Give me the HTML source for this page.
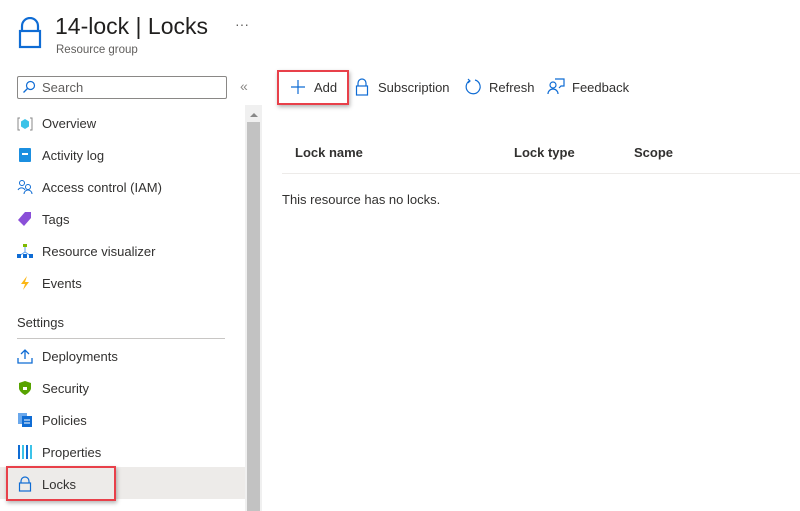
<!DOCTYPE html><html><head><style>
body{margin:0;width:800px;height:511px;overflow:hidden;background:#fff;font-family:"Liberation Sans",sans-serif;color:#323130;position:relative}
.a{position:absolute}
.it{position:absolute;left:42px;font-size:13px;color:#323130}
.ic{position:absolute;left:17px;width:16px;height:16px}
</style></head><body>
<svg class="a" style="left:18px;top:17px" width="24" height="32" viewBox="0 0 24 32"><path d="M4 14V9a8 8 0 0 1 16 0v5" fill="none" stroke="#0f6cd4" stroke-width="2.2"/><rect x="2" y="14" width="20" height="16" fill="none" stroke="#0f6cd4" stroke-width="2.2"/></svg>
<div class="a" style="left:55px;top:13px;font-size:23px;color:#201f1e">14-lock | Locks</div>
<div class="a" style="left:235px;top:16px;font-size:14px;color:#605e5c">···</div>
<div class="a" style="left:56px;top:44px;font-size:11.5px;color:#605e5c">Resource group</div>
<div class="a" style="left:17px;top:76px;width:208px;height:21px;border:1px solid #8a8886;border-radius:2px"></div>
<svg class="a" style="left:22px;top:80px" width="14" height="14"><circle cx="8.5" cy="5.5" r="4" fill="none" stroke="#0f6cd4" stroke-width="1.2"/><path d="M5.5 8.5 1.5 12.5" stroke="#0f6cd4" stroke-width="1.3"/></svg>
<div class="a" style="left:42px;top:80px;font-size:13px;color:#605e5c">Search</div>
<div class="a" style="left:240px;top:78px;font-size:14px;color:#8a8886">«</div>
<div class="a" style="left:245px;top:105px;width:17px;height:406px;background:#f0f0f0"></div>
<div class="a" style="left:247px;top:122px;width:13px;height:389px;background:#c2c2c2"></div>
<div class="a" style="left:250px;top:113px;width:0;height:0;border-left:4px solid transparent;border-right:4px solid transparent;border-bottom:4px solid #888"></div>

<svg class="ic" style="top:116px"><path d="M3 2H1v12h2M13 2h2v12h-2" stroke="#888" fill="none"/><path d="M8 3l4 2.5v5L8 13 4 10.5v-5z" fill="#3cc3e8"/></svg><div class="it" style="top:116px">Overview</div>
<svg class="ic" style="top:147px"><rect x="2" y="1" width="12" height="14" rx="1" fill="#1b8fe0"/><rect x="5" y="6" width="6" height="2" fill="#fff"/></svg><div class="it" style="top:148px">Activity log</div>
<svg class="ic" style="top:179px"><circle cx="5" cy="4" r="2.5" fill="none" stroke="#0f6cd4"/><path d="M1 11a4 4 0 0 1 7 0" fill="none" stroke="#0f6cd4"/><circle cx="11" cy="8" r="2.5" fill="none" stroke="#0f6cd4"/><path d="M7 15a4 4 0 0 1 8 0" fill="none" stroke="#0f6cd4"/></svg><div class="it" style="top:180px">Access control (IAM)</div>
<svg class="ic" style="top:211px"><path d="M8 1h6v6l-7 8-6-6z" fill="#8a4fd8"/></svg><div class="it" style="top:212px">Tags</div>
<svg class="ic" style="top:243px"><path d="M8 2v7M2 13l6-4 6 4" stroke="#5ea0ef" fill="none"/><rect x="6" y="1" width="4" height="3" fill="#7fba00"/><rect x="0" y="11" width="4" height="4" fill="#0f6cd4"/><rect x="12" y="11" width="4" height="4" fill="#0f6cd4"/><rect x="6" y="11" width="4" height="4" fill="#0f6cd4"/></svg><div class="it" style="top:244px">Resource visualizer</div>
<svg class="ic" style="top:275px"><path d="M10 1 4 9h4l-2 6 6-8H8z" fill="#fcb614"/></svg><div class="it" style="top:276px">Events</div>
<div class="a" style="left:17px;top:315px;font-size:13px;color:#323130">Settings</div>
<div class="a" style="left:17px;top:338px;width:208px;height:1px;background:#c8c6c4"></div>
<svg class="ic" style="top:348px"><path d="M1 10v5h14v-5M8 11V2M4 6l4-4 4 4" stroke="#0f6cd4" fill="none" stroke-width="1.3"/></svg><div class="it" style="top:349px">Deployments</div>
<svg class="ic" style="top:380px"><path d="M8 1l6 2v5c0 4-6 7-6 7s-6-3-6-7V3z" fill="#57a300"/><rect x="6" y="7" width="4" height="3" fill="#fff"/></svg><div class="it" style="top:381px">Security</div>
<svg class="ic" style="top:412px"><rect x="1" y="1" width="9" height="11" fill="#6aa8ec"/><rect x="5" y="4" width="10" height="11" fill="#0f6cd4"/><path d="M7 8h6M7 11h6" stroke="#fff"/></svg><div class="it" style="top:413px">Policies</div>
<svg class="ic" style="top:444px"><rect x="1" y="1" width="2" height="14" fill="#0f6cd4"/><rect x="5" y="1" width="2" height="14" fill="#3cc3e8"/><rect x="9" y="1" width="2" height="14" fill="#0f6cd4"/><rect x="13" y="1" width="2" height="14" fill="#3cc3e8"/></svg><div class="it" style="top:445px">Properties</div>
<div class="a" style="left:0;top:467px;width:245px;height:32px;background:#edebe9"></div>
<svg class="ic" style="top:476px"><path d="M4 7V5a4 4 0 0 1 8 0v2" fill="none" stroke="#0f6cd4" stroke-width="1.2"/><rect x="2.5" y="7" width="11" height="8" fill="none" stroke="#0f6cd4" stroke-width="1.2"/></svg><div class="it" style="top:477px">Locks</div>
<div class="a" style="left:6px;top:466px;width:106px;height:31px;border:2px solid #e8404a;box-shadow:1px 2px 4px rgba(0,0,0,.3)"></div>

<div class="a" style="left:277px;top:70px;width:68px;height:31px;border:2px solid #e8404a;box-shadow:1px 2px 4px rgba(0,0,0,.3)"></div>
<svg class="a" style="left:290px;top:79px" width="16" height="16"><path d="M8 1v14M1 8h14" stroke="#0f6cd4" stroke-width="1.2"/></svg>
<div class="a" style="left:314px;top:80px;font-size:13px">Add</div>
<svg class="a" style="left:355px;top:78px" width="14" height="18"><path d="M3 8V5a4 4 0 0 1 8 0v3" fill="none" stroke="#0f6cd4" stroke-width="1.2"/><rect x="1.5" y="8" width="11" height="9" fill="none" stroke="#0f6cd4" stroke-width="1.2"/></svg>
<div class="a" style="left:378px;top:80px;font-size:13px">Subscription</div>
<svg class="a" style="left:464px;top:78px" width="18" height="18"><path d="M6 2.5A7 7 0 1 0 11 2" fill="none" stroke="#0f6cd4" stroke-width="1.2"/><path d="M4 1l2 2-2 2" fill="none" stroke="#0f6cd4" stroke-width="1.2"/></svg>
<div class="a" style="left:489px;top:80px;font-size:13px">Refresh</div>
<svg class="a" style="left:547px;top:78px" width="18" height="18"><circle cx="6" cy="7" r="3" fill="none" stroke="#0f6cd4" stroke-width="1.2"/><path d="M1 16a5 5 0 0 1 10 0M8 1h9v7h-3l-2 2" fill="none" stroke="#0f6cd4" stroke-width="1.2"/></svg>
<div class="a" style="left:572px;top:80px;font-size:13px">Feedback</div>
<div class="a" style="left:295px;top:145px;font-size:13px;font-weight:bold;color:#323130">Lock name</div>
<div class="a" style="left:514px;top:145px;font-size:13px;font-weight:bold;color:#323130">Lock type</div>
<div class="a" style="left:634px;top:145px;font-size:13px;font-weight:bold;color:#323130">Scope</div>
<div class="a" style="left:282px;top:173px;width:518px;height:1px;background:#edebe9"></div>
<div class="a" style="left:282px;top:192px;font-size:13px">This resource has no locks.</div>
</body></html>
